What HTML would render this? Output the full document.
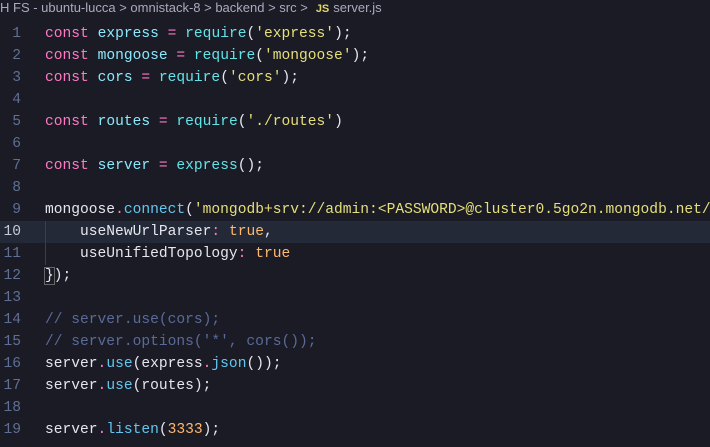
<!DOCTYPE html><html><head><style>
body{margin:0;width:710px;height:447px;background:#1a1b24;overflow:hidden;font-family:"Liberation Mono",monospace}
.bc{position:absolute;top:0;left:0;height:22px;line-height:22px;font:13px "Liberation Sans",sans-serif;color:#a9abbd;white-space:nowrap}
.bc b{color:#e5d766;font-weight:bold;font-size:11px;margin:0 4px 0 8px}
.code{position:absolute;top:23px;left:0;right:0}
.l{height:22px;line-height:22px;font-size:14.6px;white-space:pre;position:relative;color:#e6e6ef}
.l .n{position:absolute;left:0;width:21px;text-align:right;color:#5f6f95}
.l .c{position:absolute;left:45px}
.cur{background:#232936}
.cur .n{color:#c6c8d6}
.k{color:#ff79c6}.v{color:#8be9fd}.f{color:#62e3e8}.s{color:#e6df7a}.o{color:#ffb86c}.m{color:#5a6a99}.d{color:#ff79c6}.p{color:#62c6f0}
.g{position:absolute;left:45px;width:1px;background:#3a3f4e;top:221px;height:44px}
</style></head><body>
<div class="bc">H FS - ubuntu-lucca &gt; omnistack-8 &gt; backend &gt; src &gt;<b>JS</b>server.js</div>
<div class="code">
<div class="l"><span class="n">1</span><span class="c"><span class="k">const</span> <span class="v">express</span> <span class="k">=</span> <span class="f">require</span>(<span class="s">'express'</span>);</span></div>
<div class="l"><span class="n">2</span><span class="c"><span class="k">const</span> <span class="v">mongoose</span> <span class="k">=</span> <span class="f">require</span>(<span class="s">'mongoose'</span>);</span></div>
<div class="l"><span class="n">3</span><span class="c"><span class="k">const</span> <span class="v">cors</span> <span class="k">=</span> <span class="f">require</span>(<span class="s">'cors'</span>);</span></div>
<div class="l"><span class="n">4</span></div>
<div class="l"><span class="n">5</span><span class="c"><span class="k">const</span> <span class="v">routes</span> <span class="k">=</span> <span class="f">require</span>(<span class="s">'./routes'</span>)</span></div>
<div class="l"><span class="n">6</span></div>
<div class="l"><span class="n">7</span><span class="c"><span class="k">const</span> <span class="v">server</span> <span class="k">=</span> <span class="f">express</span>();</span></div>
<div class="l"><span class="n">8</span></div>
<div class="l"><span class="n">9</span><span class="c">mongoose<span class="d">.</span><span class="p">connect</span>(<span class="s">'mongodb+srv://admin:&lt;PASSWORD&gt;@cluster0.5go2n.mongodb.net/</span></span></div>
<div class="l cur"><span class="n">10</span><span class="c">    useNewUrlParser<span class="d">:</span> <span class="o">true</span>,</span></div>
<div class="l"><span class="n">11</span><span class="c">    useUnifiedTopology<span class="d">:</span> <span class="o">true</span></span></div>
<div class="l"><span class="n">12</span><span class="c"><span style="outline:1px solid #666;">}</span>);</span></div>
<div class="l"><span class="n">13</span></div>
<div class="l"><span class="n">14</span><span class="c m">// server.use(cors);</span></div>
<div class="l"><span class="n">15</span><span class="c m">// server.options('*', cors());</span></div>
<div class="l"><span class="n">16</span><span class="c">server<span class="d">.</span><span class="p">use</span>(express<span class="d">.</span><span class="p">json</span>());</span></div>
<div class="l"><span class="n">17</span><span class="c">server<span class="d">.</span><span class="p">use</span>(routes);</span></div>
<div class="l"><span class="n">18</span></div>
<div class="l"><span class="n">19</span><span class="c">server<span class="d">.</span><span class="p">listen</span>(<span class="o">3333</span>);</span></div>
</div>
<div class="g"></div>
</body></html>
